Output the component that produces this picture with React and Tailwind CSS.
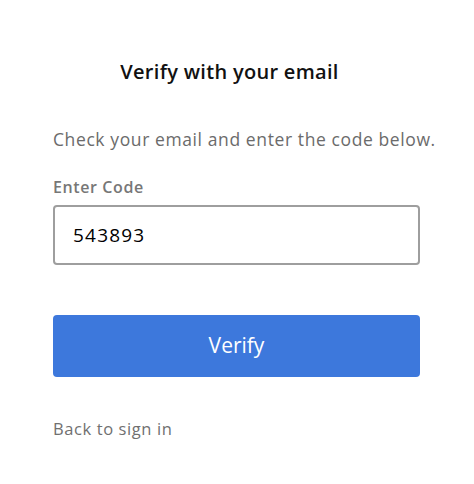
export default function App() {
  return (
    <div
      className="w-[474px] h-[484px] bg-white"
      style={{ fontFamily: "'Open Sans', 'Noto Sans', sans-serif" }}
    >
      <div className="ml-[53px] w-[367px] flex flex-col">
        <h1 className="mt-[58px] h-[28px] text-center text-[20px] leading-[28px] font-semibold tracking-[0.3px] text-[#111] pr-[14px] whitespace-nowrap">
          Verify with your email
        </h1>

        <p className="mt-[41px] text-[17.5px] leading-[24px] tracking-[0.6px] text-[#6b6b6b] whitespace-nowrap">
          Check your email and enter the code below.
        </p>

        <label className="mt-[26px] text-[16px] leading-[20px] font-semibold tracking-[0.6px] text-[#777]">
          Enter Code
        </label>

        <input
          type="text"
          defaultValue="543893"
          className="mt-[8px] h-[60px] w-full rounded-[4px] border-2 border-[#9e9e9e] px-[18px] text-[19px] tracking-[1.2px] text-black outline-none"
        />

        <button
          type="button"
          className="mt-[50px] h-[62px] w-full rounded-[4px] bg-[#3d78dc] text-[21px] font-medium text-white"
        >
          Verify
        </button>

        <a className="mt-[41px] text-[16.5px] leading-[22px] tracking-[0.6px] text-[#707070]">
          Back to sign in
        </a>
      </div>
    </div>
  )
}
